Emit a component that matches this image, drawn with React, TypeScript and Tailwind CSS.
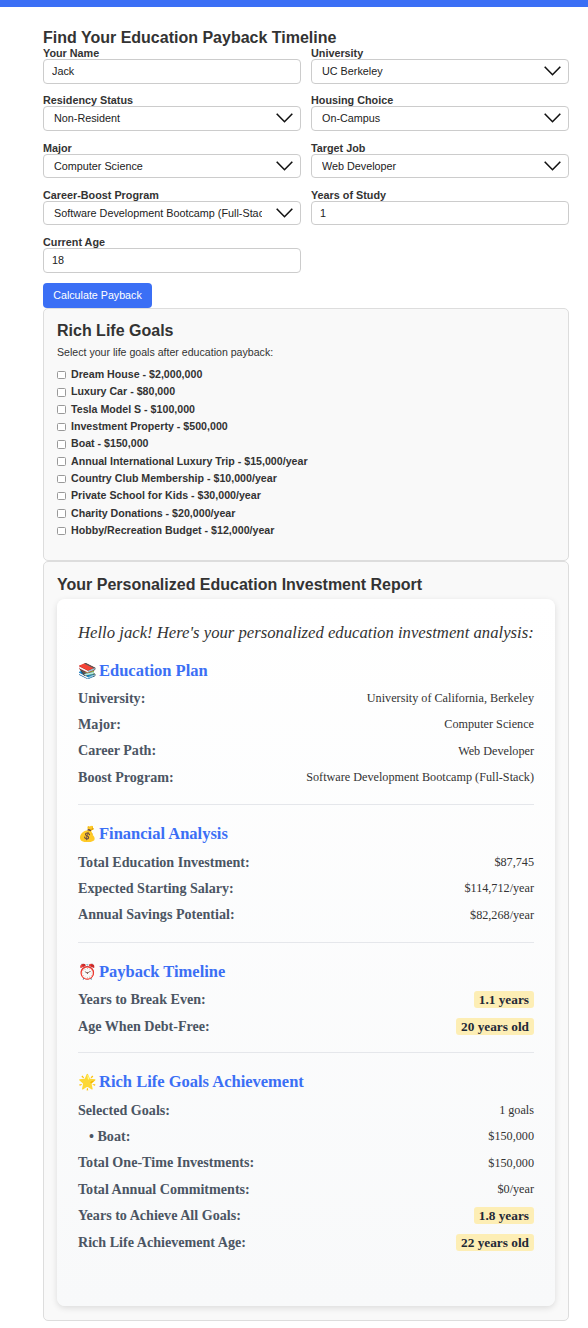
import React from 'react';

const sans = { fontFamily: '"Liberation Sans", Arial, sans-serif' };

function Chevron() {
  return (
    <svg className="absolute right-[8px] top-[7px] pointer-events-none" width="17" height="10" viewBox="0 0 17 10" fill="none">
      <path d="M0.7 0.7 L8.5 8.7 L16.3 0.7" stroke="#111" strokeWidth="1.6" />
    </svg>
  );
}

function TextField({ label, value }: { label: string; value: string }) {
  return (
    <div className="flex flex-col h-[47.3px]">
      <label className="text-[10.8px] font-bold leading-[12px] text-[#333]">{label}</label>
      <input
        readOnly
        value={value}
        className="h-[24.5px] w-full rounded-[4px] border border-[#ccc] bg-white px-[8px] text-[10.8px] text-[#222] outline-none"
      />
    </div>
  );
}

function SelectField({ label, value }: { label: string; value: string }) {
  return (
    <div className="flex flex-col h-[47.3px]">
      <label className="text-[10.8px] font-bold leading-[12px] text-[#333]">{label}</label>
      <div className="relative h-[24.5px]">
        <select
          value={value}
          onChange={() => {}}
          className="block h-full w-full appearance-none rounded-[4px] border border-[#ccc] bg-white pl-[10px] pr-[38px] text-[10.8px] text-[#222] outline-none"
        >
          <option>{value}</option>
        </select>
        <Chevron />
      </div>
    </div>
  );
}

const goals = [
  'Dream House - $2,000,000',
  'Luxury Car - $80,000',
  'Tesla Model S - $100,000',
  'Investment Property - $500,000',
  'Boat - $150,000',
  'Annual International Luxury Trip - $15,000/year',
  'Country Club Membership - $10,000/year',
  'Private School for Kids - $30,000/year',
  'Charity Donations - $20,000/year',
  'Hobby/Recreation Budget - $12,000/year',
];

function Row({ label, value, hl, indent }: { label: string; value: string; hl?: boolean; indent?: boolean }) {
  return (
    <div className="flex h-[26.4px] items-center justify-between">
      <span className={`text-[14.1px] font-bold text-[#4b5563] ${indent ? 'pl-[11px]' : ''}`}>{label}</span>
      {hl ? (
        <span className="rounded-[3px] bg-[#fdeeb5] px-[5px] py-px text-[13.3px] font-bold leading-[15px] text-[#1f2937]">{value}</span>
      ) : (
        <span className="text-[12.2px] text-[#333]">{value}</span>
      )}
    </div>
  );
}

function Heading({ icon, title }: { icon: string; title: string }) {
  return (
    <h4 className="flex items-center gap-[4px] h-[24px] text-[16.5px] font-bold text-[#3b6ff5]">
      <span className="w-[17px] text-[15px]" style={{ fontFamily: '"Noto Color Emoji", sans-serif' }}>{icon}</span>
      {title}
    </h4>
  );
}

export default function App() {
  return (
    <div className="min-h-[1328px] bg-white" style={sans}>
      <div className="h-[7px] bg-[#3b6ff5]" />
      <div className="pl-[43px] pr-[19px]">
        <h2 className="mt-[22px] text-[16px] font-bold leading-[18px] text-[#333]">Find Your Education Payback Timeline</h2>
        <div className="grid grid-cols-2 gap-x-[10px]">
          <TextField label="Your Name" value="Jack" />
          <SelectField label="University" value="UC Berkeley" />
          <SelectField label="Residency Status" value="Non-Resident" />
          <SelectField label="Housing Choice" value="On-Campus" />
          <SelectField label="Major" value="Computer Science" />
          <SelectField label="Target Job" value="Web Developer" />
          <SelectField label="Career-Boost Program" value="Software Development Bootcamp (Full-Stack)" />
          <TextField label="Years of Study" value="1" />
          <TextField label="Current Age" value="18" />
        </div>
        <button className="block h-[25px] w-[109px] rounded-[4px] bg-[#3b6ff5] pb-[2px] text-[10.7px] text-white">Calculate Payback</button>

        <section className="h-[253px] rounded-[5px] border border-[#ddd] bg-[#f9f9f9] px-[13px] pt-[13px]">
          <h3 className="text-[16px] font-bold leading-[18px] text-[#333]">Rich Life Goals</h3>
          <p className="mt-[5px] text-[10.6px] leading-[14px] text-[#333]">Select your life goals after education payback:</p>
          <div className="mt-[7px]">
            {goals.map((g) => (
              <label key={g} className="flex h-[17.3px] items-center gap-[5.5px] text-[10.65px] font-bold text-[#333]">
                <span className="h-[8.5px] w-[8.5px] rounded-[1.5px] border border-[#999] bg-white" />
                {g}
              </label>
            ))}
          </div>
        </section>

        <section className="h-[760px] rounded-[5px] border border-[#ddd] bg-[#f9f9f9] px-[13px] pt-[13px]">
          <h3 className="text-[16px] font-bold leading-[20px] text-[#333]">Your Personalized Education Investment Report</h3>
          <div
            className="mt-[4px] h-[707px] rounded-[8px] bg-gradient-to-b from-white to-[#f8f9fa] px-[21px] pt-[23px] shadow-[0_2px_6px_rgba(0,0,0,0.12)]"
            style={{ fontFamily: '"Liberation Serif", Georgia, serif' }}
          >
            <p className="whitespace-nowrap text-[16.7px] italic leading-[22px] text-[#333]">Hello jack! Here's your personalized education investment analysis:</p>

            <div className="mt-[15px]"><Heading icon="📚" title="Education Plan" /></div>
            <div className="mt-[1.5px] border-b border-[#e5e7eb] pb-[13.5px]">
              <Row label="University:" value="University of California, Berkeley" />
              <Row label="Major:" value="Computer Science" />
              <Row label="Career Path:" value="Web Developer" />
              <Row label="Boost Program:" value="Software Development Bootcamp (Full-Stack)" />
            </div>

            <div className="mt-[17px]"><Heading icon="💰" title="Financial Analysis" /></div>
            <div className="mt-[3px] border-b border-[#e5e7eb] pb-[14px]">
              <Row label="Total Education Investment:" value="$87,745" />
              <Row label="Expected Starting Salary:" value="$114,712/year" />
              <Row label="Annual Savings Potential:" value="$82,268/year" />
            </div>

            <div className="mt-[17px]"><Heading icon="⏰" title="Payback Timeline" /></div>
            <div className="mt-[2.5px] border-b border-[#e5e7eb] pb-[12.5px]">
              <Row label="Years to Break Even:" value="1.1 years" hl />
              <Row label="Age When Debt-Free:" value="20 years old" hl />
            </div>

            <div className="mt-[17px]"><Heading icon="🌟" title="Rich Life Goals Achievement" /></div>
            <div className="mt-[3px]">
              <Row label="Selected Goals:" value="1 goals" />
              <Row label="• Boat:" value="$150,000" indent />
              <Row label="Total One-Time Investments:" value="$150,000" />
              <Row label="Total Annual Commitments:" value="$0/year" />
              <Row label="Years to Achieve All Goals:" value="1.8 years" hl />
              <Row label="Rich Life Achievement Age:" value="22 years old" hl />
            </div>
          </div>
        </section>
      </div>
    </div>
  );
}
